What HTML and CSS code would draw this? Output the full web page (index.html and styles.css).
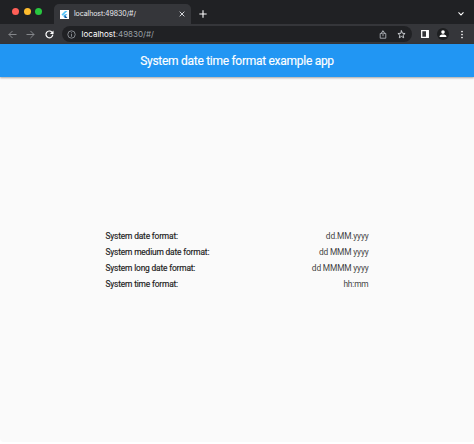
FILE: index.html
```html
<!DOCTYPE html>
<html lang="en">
<head>
<meta charset="utf-8">
<title>System date time format example app</title>
<link rel="stylesheet" href="styles.css">
</head>
<body>
<div class="window">
  <header class="tabstrip">
    <div class="lights"><i class="red"></i><i class="yellow"></i><i class="green"></i></div>
    <div class="tab">
      <svg class="favicon" viewBox="0 0 9 9"><rect width="9" height="9" fill="#fff"/><path d="M1.5 4.5 5 1h2.4L2.7 5.7z" fill="#55c5f8"/><path d="M5 4.2h2.4L5.6 6l1.8 1.9H5L3.1 6z" fill="#40a7e8"/><path d="m4.3 6.7 1.3-.7 1.8 1.9H5z" fill="#17599c"/></svg>
      <span class="tab-title">localhost:49830/#/</span>
      <svg class="close" viewBox="0 0 6 6"><path d="m1 1 4 4m0-4L1 5"/></svg>
    </div>
    <svg class="plus" viewBox="0 0 8 8"><path d="M4 .9v6.2M.9 4h6.2"/></svg>
    <svg class="chevron" viewBox="0 0 6 4"><path d="m.9.8 2.1 2.1L5.1.8"/></svg>
  </header>
  <nav class="toolbar">
    <svg class="nav back" viewBox="0 0 9 9"><path d="M8 4.5H1.2m3-3.2L1 4.5l3.2 3.2"/></svg>
    <svg class="nav forward" viewBox="0 0 9 9"><path d="M1 4.5h6.8M4.8 1.3 8 4.5 4.8 7.7"/></svg>
    <svg class="nav reload" viewBox="0 0 9 9"><path d="M7.7 5.1A3.4 3.4 0 1 1 6.9 2.1l.8.9"/><path class="tip" d="M8.5.5v3.6H4.9z"/></svg>
    <div class="address">
      <svg class="info" viewBox="0 0 9 9"><circle cx="4.5" cy="4.5" r="3.7"/><path d="M4.5 4v2.7M4.5 2.3v1"/></svg>
      <span class="url">localhost<span class="port">:49830/#/</span></span>
      <svg class="share" viewBox="0 0 8 9"><path d="M2.8 3.5H1.2v4.7h5.6V3.5H5.2M4 5.7V1M2.4 2.5 4 .9l1.6 1.6"/></svg>
      <svg class="star" viewBox="0 0 9 9"><path d="m4.5.9 1 2.4 2.6.2-2 1.7.6 2.6-2.2-1.4-2.2 1.4.6-2.6-2-1.7 2.6-.2z"/></svg>
    </div>
    <svg class="panel" viewBox="0 0 8 8"><path d="M.7.7h6.6v6.6H.7z"/><path class="fill" d="M5 .7h2.3v6.6H5z"/></svg>
    <svg class="avatar" viewBox="0 0 12 12"><circle cx="6" cy="6" r="6" fill="#1d1e20"/><circle cx="6" cy="4.1" r="1.8" fill="#fff"/><path d="M2.6 9V8.5C2.6 7.1 4.4 6.5 6 6.5s3.4.6 3.4 2V9z" fill="#fff"/></svg>
    <svg class="more" viewBox="0 0 2 9"><circle cx="1" cy="1.5" r=".85"/><circle cx="1" cy="4.5" r=".85"/><circle cx="1" cy="7.5" r=".85"/></svg>
  </nav>
  <h1 class="appbar">System date time format example app</h1>
  <main class="content">
    <dl class="formats">
      <div class="row"><dt>System date format:</dt><dd>dd.MM.yyyy</dd></div>
      <div class="row"><dt>System medium date format:</dt><dd>dd MMM yyyy</dd></div>
      <div class="row"><dt>System long date format:</dt><dd>dd MMMM yyyy</dd></div>
      <div class="row"><dt>System time format:</dt><dd>hh:mm</dd></div>
    </dl>
  </main>
</div>
</body>
</html>
```
FILE: styles.css
```css
* { box-sizing: border-box; }
body { margin: 0; background: #fff; font-family: Roboto, sans-serif; }
.window { display: flex; flex-direction: column; width: 474px; height: 442px; overflow: hidden; border-radius: 0 0 4px 4px; background: #fafafa; }
svg { display: block; flex: none; fill: none; stroke-linecap: square; }
.tabstrip { display: flex; flex: none; height: 24px; padding: 4px 10px 0 12px; background: #202124; }
.lights { display: flex; gap: 4.5px; width: 42px; padding-top: 4px; }
.lights i { flex: none; width: 7px; height: 7px; border-radius: 50%; }
.red { background: #ff5f57; }
.yellow { background: #febc2e; }
.green { background: #28c840; }
.tab { display: flex; align-items: center; width: 137px; height: 20px; padding: 0 6px; border-radius: 5px 5px 0 0; background: #35363a; }
.favicon { width: 9px; height: 9px; }
.tab-title { margin-left: 5px; color: #e8eaed; font-family: Inter, sans-serif; font-size: 7px; letter-spacing: -.08px; line-height: 10px; white-space: nowrap; }
.close { width: 6px; height: 6px; margin-left: auto; stroke: #e8eaed; stroke-width: .9; }
.plus { width: 8px; height: 8px; margin: 6px 0 0 8px; stroke: #fff; stroke-width: 1.1; }
.chevron { width: 6px; height: 4px; margin: 8px 0 0 auto; stroke: #fff; stroke-width: 1.1; }
.toolbar { display: flex; flex: none; align-items: center; height: 20px; padding: 0 11px 0 8px; background: #35363a; }
.nav { width: 9px; height: 9px; margin-right: 9px; stroke: #85878b; stroke-width: 1; }
.reload { margin-right: 8px; margin-left: 1px; stroke: #fff; stroke-width: 1.2; }
.tip { fill: #fff; stroke: none; }
.address { display: flex; flex: none; align-items: center; width: 350px; height: 16px; padding: 0 6px 0 5px; border-radius: 8px; background: #202124; }
.info { width: 9px; height: 9px; stroke: #9aa0a6; stroke-width: .8; stroke-linecap: butt; }
.url { margin-left: 5.5px; color: #fff; font-family: Inter, sans-serif; font-size: 8px; line-height: 12px; white-space: nowrap; }
.port { color: #9aa0a6; }
.share { width: 8px; height: 9px; margin-left: auto; stroke: #bdc1c6; stroke-width: .8; }
.star { width: 9px; height: 9px; margin-left: 10px; stroke: #d5d8db; stroke-width: .9; }
.panel { width: 8px; height: 8px; margin-left: 9px; stroke: #fff; stroke-width: 1.3; }
.fill { fill: #fff; stroke: none; }
.avatar { width: 12px; height: 12px; margin-left: 8px; }
.more { width: 2px; height: 9px; margin-left: auto; fill: #fff; }
.appbar { flex: none; position: relative; height: 33px; margin: 0; background: #2196f3; color: #fff; font-size: 12px; font-weight: 400; letter-spacing: -.28px; line-height: 35px; text-align: center; white-space: nowrap; -webkit-text-stroke: .15px #fff; box-shadow: 0 1px 2px rgba(0,0,0,.35); }
.content { display: flex; flex: 1; justify-content: center; padding-top: 151px; }
.formats { width: 263px; margin: 0; }
.row { display: flex; justify-content: space-between; height: 16px; font-size: 8.4px; letter-spacing: -.17px; line-height: 17px; color: #212121; white-space: nowrap; }
dt { -webkit-text-stroke: .15px #212121; }
dd { margin: 0; color: #444; letter-spacing: -.17px; }
```
